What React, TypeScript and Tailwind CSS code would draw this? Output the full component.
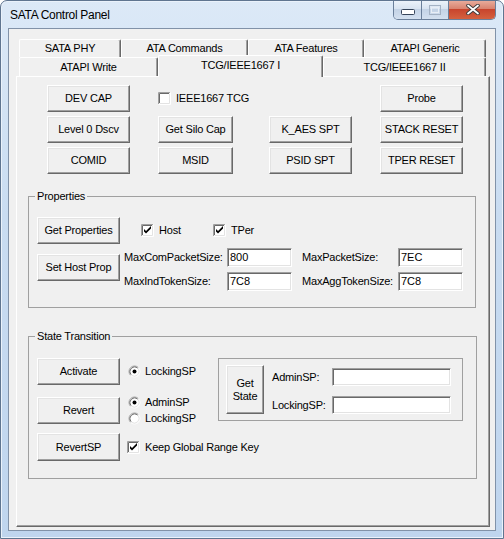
import React from 'react';

const font = "font-['Liberation_Sans',Arial,sans-serif]";

function Btn({ children, className = '' }: { children: React.ReactNode; className?: string }) {
  return (
    <button
      type="button"
      className={`flex shrink-0 items-center justify-center border border-t-white border-l-white border-r-[#696969] border-b-[#696969] bg-[#f0f0f0] text-center text-[11px] leading-[13px] tracking-[-0.2px] text-black shadow-[inset_-1px_-1px_0_#a0a0a0,inset_1px_1px_0_#e3e3e3] ${className}`}
    >
      {children}
    </button>
  );
}

function CheckBox({ checked = false }: { checked?: boolean }) {
  return (
    <svg width="13" height="13" viewBox="0 0 13 13" className="shrink-0">
      <rect x="1" y="1" width="11" height="11" fill="#fff" />
      <path d="M0.5 12V0.5H12" fill="none" stroke="#a0a0a0" />
      <path d="M1.5 11V1.5H11" fill="none" stroke="#696969" />
      <path d="M1.5 11.5H11.5V1.5" fill="none" stroke="#e3e3e3" />
      <path d="M0.5 12.5H12.5V0.5" fill="none" stroke="#fff" />
      {checked && <polygon points="3,5 5,7 10,2 10,4.6 5,9.6 3,7.6" fill="#000" />}
    </svg>
  );
}

function Radio({ checked = false }: { checked?: boolean }) {
  return (
    <svg width="13" height="13" viewBox="0 0 13 13" className="shrink-0">
      <circle cx="6.5" cy="6.5" r="5" fill="#fff" />
      <path d="M2.61 10.39A5.5 5.5 0 0 1 10.39 2.61" fill="none" stroke="#a0a0a0" />
      <path d="M10.39 2.61A5.5 5.5 0 0 1 2.61 10.39" fill="none" stroke="#fff" />
      <path d="M3.32 9.68A4.5 4.5 0 0 1 9.68 3.32" fill="none" stroke="#696969" />
      <path d="M9.68 3.32A4.5 4.5 0 0 1 3.32 9.68" fill="none" stroke="#e3e3e3" />
      {checked && <circle cx="6.5" cy="6.5" r="2" fill="#000" />}
    </svg>
  );
}

function Field({ value = '', className = '' }: { value?: string; className?: string }) {
  return (
    <div
      className={`flex items-center border border-t-[#a0a0a0] border-l-[#a0a0a0] border-r-white border-b-white bg-white pl-[2px] text-[11px] leading-[13px] text-black shadow-[inset_1px_1px_0_#696969,inset_-1px_-1px_0_#e3e3e3] ${className}`}
    >
      {value}
    </div>
  );
}

function Label({ children, className = '' }: { children: React.ReactNode; className?: string }) {
  return <span className={`text-[11px] leading-[13px] tracking-[-0.2px] text-black whitespace-nowrap ${className}`}>{children}</span>;
}

function Tab({ label, className = '' }: { label: string; className?: string }) {
  return (
    <div
      className={`flex shrink-0 items-center justify-center rounded-t-[2px] border-t border-l border-r border-t-white border-l-white border-r-[#696969] bg-[#f0f0f0] text-[11px] leading-[13px] tracking-[-0.2px] text-black shadow-[inset_-1px_0_0_#a0a0a0] ${className}`}
    >
      {label}
    </div>
  );
}

export default function App() {
  return (
    <div
      className={`${font} flex h-[539px] w-[504px] flex-col overflow-hidden rounded-t-[7px] border border-[#5f7590] bg-[linear-gradient(180deg,#dce9f7_0%,#c9dcf1_40%,#bfd5ee_100%)] shadow-[inset_0_0_0_1px_#eaf2fb]`}
    >
      {/* title bar */}
      <div className="flex h-[27px] shrink-0 items-start justify-between">
        <span className="mt-[7px] ml-[9px] text-[12px] leading-[14px] tracking-[-0.3px] text-black">SATA Control Panel</span>
        <div className="mr-[7px] -mt-[1px] flex h-[20px] overflow-hidden rounded-b-[5px] border border-t-0 border-[#6a7f9a]">
          <div className="flex w-[28px] items-end justify-center border-r border-[#6a7f9a] bg-[linear-gradient(180deg,#eef4fb_0%,#d9e4f1_45%,#c4d3e6_50%,#d3e0ef_100%)] pb-[4px]">
            <svg width="14" height="6" viewBox="0 0 14 6">
              <rect x="0.5" y="0.5" width="13" height="5" rx="1" fill="#fff" stroke="#36455a" />
            </svg>
          </div>
          <div className="flex w-[27px] items-center justify-center border-r border-[#6a7f9a] bg-[linear-gradient(180deg,#eef4fb_0%,#d9e4f1_45%,#c4d3e6_50%,#d3e0ef_100%)]">
            <svg width="12" height="10" viewBox="0 0 12 10">
              <rect x="0.5" y="0.5" width="11" height="9" fill="none" stroke="#a4b2c4" />
              <rect x="2.5" y="2.5" width="7" height="5" fill="none" stroke="#e8eef6" />
            </svg>
          </div>
          <div className="flex w-[46px] items-center justify-center bg-[linear-gradient(180deg,#eab0a0_0%,#d98470_45%,#c8452d_50%,#d4613f_100%)]">
            <svg width="14" height="11" viewBox="0 0 14 11" className="ml-[2px]">
              <path d="M2 1.5L12 9.5M12 1.5L2 9.5" stroke="#3a3a3a" strokeWidth="3.6" strokeLinecap="round" />
              <path d="M2 1.5L12 9.5M12 1.5L2 9.5" stroke="#fff" strokeWidth="1.8" strokeLinecap="round" />
            </svg>
          </div>
        </div>
      </div>

      {/* client area */}
      <div className="mx-[7px] mb-[7px] flex flex-1 flex-col border border-[#8192a8] bg-[#f0f0f0] pt-[10px] pl-[7px]">
        {/* tab rows */}
        <div className="ml-[3px] flex h-[18px]">
          <Tab label="SATA PHY" className="h-[18px] w-[102px]" />
          <Tab label="ATA Commands" className="h-[18px] w-[127px]" />
          <Tab label="ATA Features" className="h-[18px] w-[116px]" />
          <Tab label="ATAPI Generic" className="h-[18px] w-[122px]" />
        </div>
        <div className="ml-[3px] flex h-[19px] items-end">
          <Tab label="ATAPI Write" className="h-[19px] w-[139px]" />
          <Tab label="TCG/IEEE1667 I" className="relative z-10 -mb-[1px] h-[22px] w-[165px] items-start pt-[3px]" />
          <Tab label="TCG/IEEE1667 II" className="h-[19px] w-[163px]" />
        </div>

        {/* tab page */}
        <div className="flex h-[451px] w-[474px] flex-col border border-t-white border-l-white border-r-[#696969] border-b-[#696969] pt-[8px] pl-[11px] shadow-[inset_-1px_-1px_0_#a0a0a0]">
          <div className="ml-[19px] grid grid-cols-[111px_111px_111px_83px] gap-y-[4px]">
            <Btn className="h-[27px] w-[83px] text-[#10104a]">DEV CAP</Btn>
            <div className="flex h-[27px] items-center gap-[5px] pb-[1px]">
              <CheckBox />
              <Label>IEEE1667 TCG</Label>
            </div>
            <div />
            <Btn className="h-[27px] w-[83px]">Probe</Btn>

            <Btn className="h-[27px] w-[83px]">Level 0 Dscv</Btn>
            <Btn className="h-[27px] w-[75px]">Get Silo Cap</Btn>
            <Btn className="h-[27px] w-[83px]">K_AES SPT</Btn>
            <Btn className="h-[27px] w-[83px]">STACK RESET</Btn>

            <Btn className="h-[27px] w-[83px]">COMID</Btn>
            <Btn className="h-[27px] w-[75px]">MSID</Btn>
            <Btn className="h-[27px] w-[83px]">PSID SPT</Btn>
            <Btn className="h-[27px] w-[83px]">TPER RESET</Btn>
          </div>

          {/* Properties */}
          <fieldset className="mt-[16px] w-[448px] border border-[#a0a0a0] pt-[14px] pb-[16px] pl-[8px]">
            <legend className="-ml-[2px] px-[2px] text-[11px] leading-[13px] tracking-[-0.2px] text-black">Properties</legend>
            <div className="flex items-center">
              <Btn className="h-[27px] w-[83px]">Get Properties</Btn>
              <div className="ml-[21px] flex w-[72px] items-center gap-[5px]">
                <CheckBox checked />
                <Label>Host</Label>
              </div>
              <div className="flex items-center gap-[5px]">
                <CheckBox checked />
                <Label>TPer</Label>
              </div>
            </div>
            <div className="mt-[4px] flex items-start">
              <Btn className="mt-[6px] h-[27px] w-[83px]">Set Host Prop</Btn>
              <div className="ml-[4px] grid grid-cols-[103px_65px_106px_65px] items-center gap-y-[5px]">
                <Label>MaxComPacketSize:</Label>
                <Field value="800" className="h-[19px]" />
                <Label className="ml-[10px]">MaxPacketSize:</Label>
                <Field value="7EC" className="h-[19px]" />
                <Label>MaxIndTokenSize:</Label>
                <Field value="7C8" className="h-[19px]" />
                <Label className="ml-[10px]">MaxAggTokenSize:</Label>
                <Field value="7C8" className="h-[19px]" />
              </div>
            </div>
          </fieldset>

          {/* State Transition */}
          <fieldset className="mt-[22px] w-[449px] border border-[#a0a0a0] pt-[15px] pb-[17px] pl-[8px]">
            <legend className="-ml-[2px] px-[2px] text-[11px] leading-[13px] tracking-[-0.2px] text-black">State Transition</legend>
            <div className="flex items-start">
              <div className="flex w-[181px] flex-col">
                <div className="flex items-center">
                  <Btn className="h-[27px] w-[83px]">Activate</Btn>
                  <div className="ml-[8px] flex items-center gap-[4px]">
                    <Radio checked />
                    <Label>LockingSP</Label>
                  </div>
                </div>
                <div className="mt-[9px] flex items-center">
                  <Btn className="h-[27px] w-[83px]">Revert</Btn>
                  <div className="ml-[8px] flex flex-col">
                    <div className="flex h-[16px] items-center gap-[4px]">
                      <Radio checked />
                      <Label>AdminSP</Label>
                    </div>
                    <div className="flex h-[16px] items-center gap-[4px]">
                      <Radio />
                      <Label>LockingSP</Label>
                    </div>
                  </div>
                </div>
              </div>
              <div className="flex h-[63px] w-[245px] items-start border border-[#a0a0a0] pt-[6px] pl-[7px]">
                <Btn className="h-[49px] w-[38px] flex-col">
                  <span>Get</span>
                  <span>State</span>
                </Btn>
                <div className="mt-[3px] ml-[8px] grid grid-cols-[60px_119px] items-center gap-y-[10px]">
                  <Label>AdminSP:</Label>
                  <Field className="h-[18px]" />
                  <Label>LockingSP:</Label>
                  <Field className="h-[18px]" />
                </div>
              </div>
            </div>
            <div className="mt-[7px] flex items-center">
              <Btn className="h-[28px] w-[83px]">RevertSP</Btn>
              <div className="ml-[7px] flex items-center gap-[5px]">
                <CheckBox checked />
                <Label>Keep Global Range Key</Label>
              </div>
            </div>
          </fieldset>
        </div>
      </div>
    </div>
  );
}
